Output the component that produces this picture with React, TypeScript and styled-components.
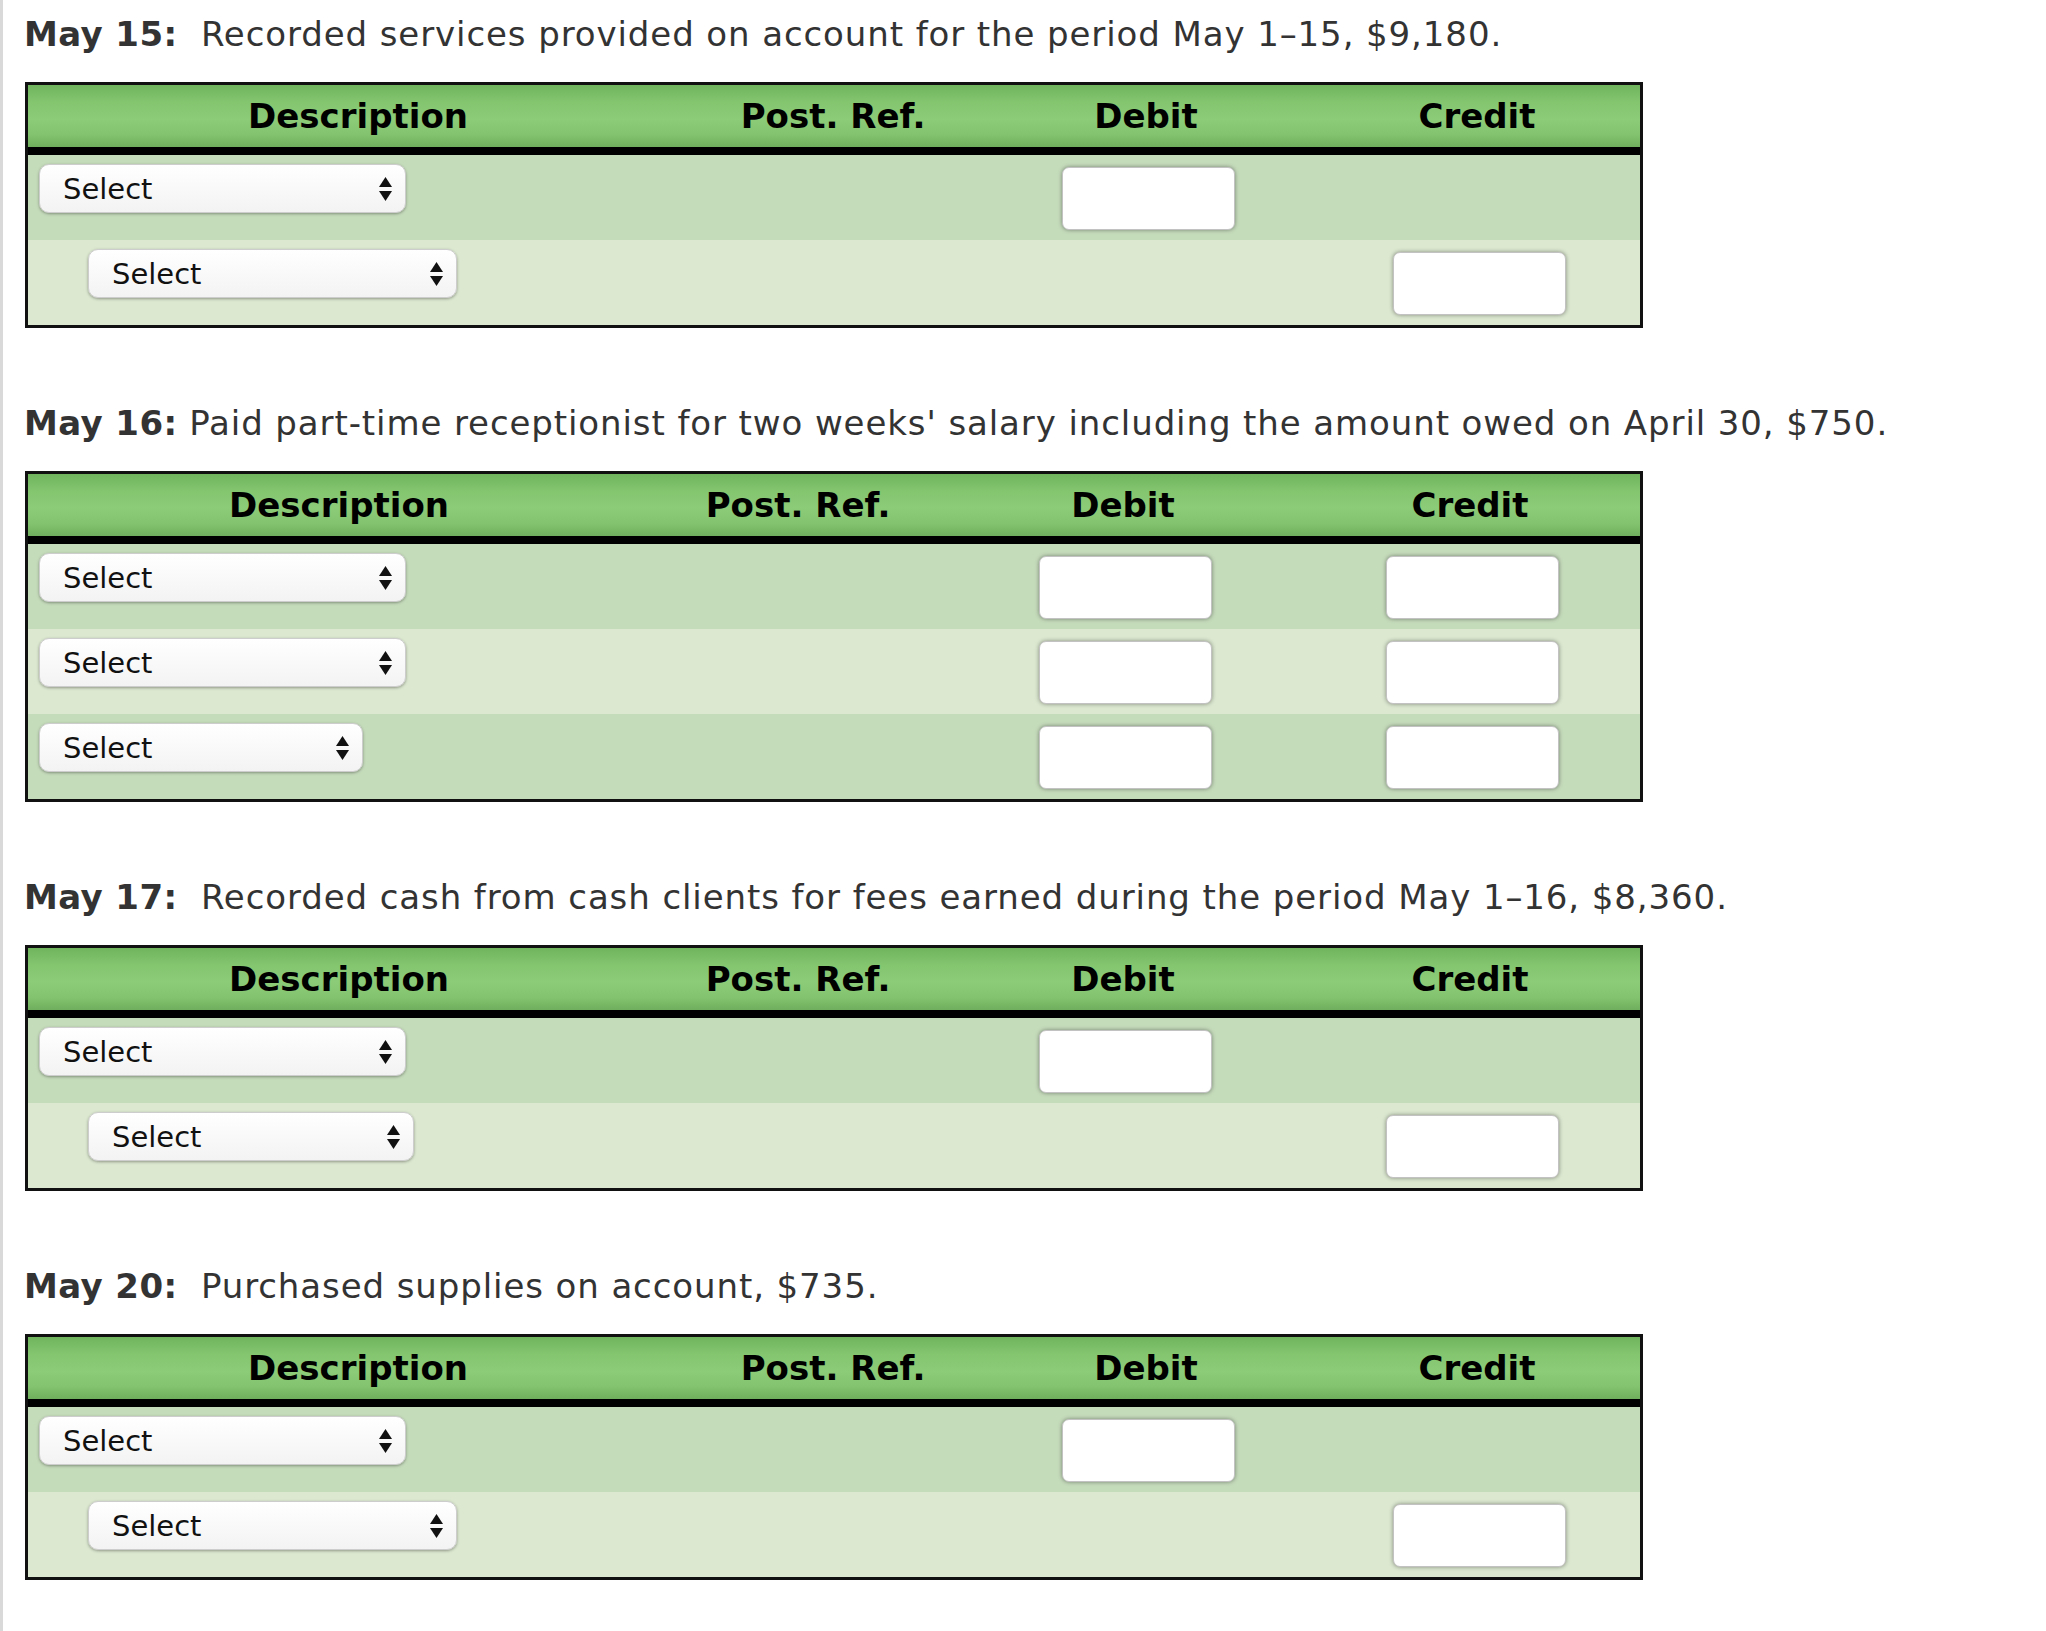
import * as React from "react";
import styled, { createGlobalStyle } from "styled-components";

type Side = "debit" | "credit" | "both";

type Line = {
  side: Side;
  selectWidth: number;
  indent?: boolean;
};

type Entry = {
  date: string;
  text: string;
  wideGap: boolean;
  cols: string;
  lines: Line[];
};

const WIDE_COLS = "660px 290px 336px 326px";
const NARROW_COLS = "622px 296px 354px 340px";

const twoLines: Line[] = [
  { side: "debit", selectWidth: 367 },
  { side: "credit", selectWidth: 369, indent: true },
];

const entries: Entry[] = [
  {
    date: "May 15:",
    text: "Recorded services provided on account for the period May 1\u201315, $9,180.",
    wideGap: true,
    cols: WIDE_COLS,
    lines: twoLines,
  },
  {
    date: "May 16:",
    text: "Paid part-time receptionist for two weeks' salary including the amount owed on April 30, $750.",
    wideGap: false,
    cols: NARROW_COLS,
    lines: [
      { side: "both", selectWidth: 367 },
      { side: "both", selectWidth: 367 },
      { side: "both", selectWidth: 324 },
    ],
  },
  {
    date: "May 17:",
    text: "Recorded cash from cash clients for fees earned during the period May 1\u201316, $8,360.",
    wideGap: true,
    cols: NARROW_COLS,
    lines: [
      { side: "debit", selectWidth: 367 },
      { side: "credit", selectWidth: 326, indent: true },
    ],
  },
  {
    date: "May 20:",
    text: "Purchased supplies on account, $735.",
    wideGap: true,
    cols: WIDE_COLS,
    lines: twoLines,
  },
];

const GlobalStyle = createGlobalStyle`
  html, body {
    margin: 0;
    padding: 0;
    background: #fff;
  }
  body {
    font-family: "DejaVu Sans", Verdana, sans-serif;
  }
`;

const Page = styled.div`
  min-height: 100vh;
  box-sizing: border-box;
  border-left: 3px solid #d9d9d9;
  padding: 13px 0 40px 21px;
  color: #333;
`;

const Prompt = styled.p`
  margin: 0 0 27px;
  font-size: 34px;
  line-height: 42px;
  letter-spacing: 0.9px;
  white-space: nowrap;
`;

const DateLabel = styled.span`
  font-weight: bold;
  letter-spacing: 0.4px;
`;

const Journal = styled.div`
  width: 1618px;
  box-sizing: border-box;
  border: 3px solid #111;
  margin: 0 0 74px 1px;
`;

const HeadRow = styled.div<{ $cols: string }>`
  display: grid;
  grid-template-columns: ${p => p.$cols};
  align-items: center;
  height: 62px;
  border-bottom: 8px solid #000;
  background: linear-gradient(
    180deg,
    #70b55e 0%,
    #84c570 28%,
    #8ccb78 55%,
    #83c36f 80%,
    #6fae5c 100%
  );
`;

const HeadCell = styled.div`
  text-align: center;
  font-size: 34px;
  font-weight: bold;
  color: #000;
  line-height: 1;
`;

const BodyRow = styled.div<{ $cols: string; $alt: boolean }>`
  display: grid;
  grid-template-columns: ${p => p.$cols};
  align-items: start;
  height: 85px;
  background: ${p => (p.$alt ? "#dce8d0" : "#c5dcbb")};
`;

const DescCell = styled.div<{ $indent: boolean }>`
  padding: 9px 0 0 ${p => (p.$indent ? 60 : 11)}px;
`;

const AmountCell = styled.div`
  display: flex;
  justify-content: center;
  padding: 12px 0 0 4px;
`;

const SelectBox = styled.button<{ $width: number }>`
  display: flex;
  align-items: center;
  justify-content: space-between;
  width: ${p => p.$width}px;
  height: 49px;
  box-sizing: border-box;
  padding: 0 12px 0 23px;
  border: 1px solid #cdcdcd;
  border-radius: 10px;
  background: linear-gradient(180deg, #ffffff, #f3f3f3);
  box-shadow: 0 1px 3px rgba(0, 0, 0, 0.35);
  font-family: "DejaVu Sans", Verdana, sans-serif;
  font-size: 29px;
  color: #111;
  cursor: pointer;
`;

const Amount = styled.input`
  width: 173px;
  height: 63px;
  box-sizing: border-box;
  border: 1px solid #c2c2c2;
  border-radius: 7px;
  background: #fff;
  box-shadow: 0 0 4px rgba(0, 0, 0, 0.4);
  outline: none;
`;

const Arrows = () => (
  <svg width="15" height="26" viewBox="0 0 15 26" aria-hidden="true">
    <polygon points="7.5,1 14,11 1,11" fill="#111" />
    <polygon points="1,15 14,15 7.5,25" fill="#111" />
  </svg>
);

const Select = ({ width }: { width: number }) => (
  <SelectBox type="button" $width={width}>
    <span>Select</span>
    <Arrows />
  </SelectBox>
);

const EntryTable = ({ entry }: { entry: Entry }) => (
  <>
    <Prompt>
      <DateLabel>{entry.date}</DateLabel>
      {entry.wideGap ? "\u00a0 " : " "}
      {entry.text}
    </Prompt>
    <Journal>
      <HeadRow $cols={entry.cols}>
        <HeadCell>Description</HeadCell>
        <HeadCell>Post. Ref.</HeadCell>
        <HeadCell>Debit</HeadCell>
        <HeadCell>Credit</HeadCell>
      </HeadRow>
      {entry.lines.map((line, i) => (
        <BodyRow key={i} $cols={entry.cols} $alt={i % 2 === 1}>
          <DescCell $indent={!!line.indent}>
            <Select width={line.selectWidth} />
          </DescCell>
          <div />
          <AmountCell>{line.side !== "credit" && <Amount type="text" />}</AmountCell>
          <AmountCell>{line.side !== "debit" && <Amount type="text" />}</AmountCell>
        </BodyRow>
      ))}
    </Journal>
  </>
);

export default function App() {
  return (
    <>
      <GlobalStyle />
      <Page>
        {entries.map(e => (
          <EntryTable key={e.date} entry={e} />
        ))}
      </Page>
    </>
  );
}
